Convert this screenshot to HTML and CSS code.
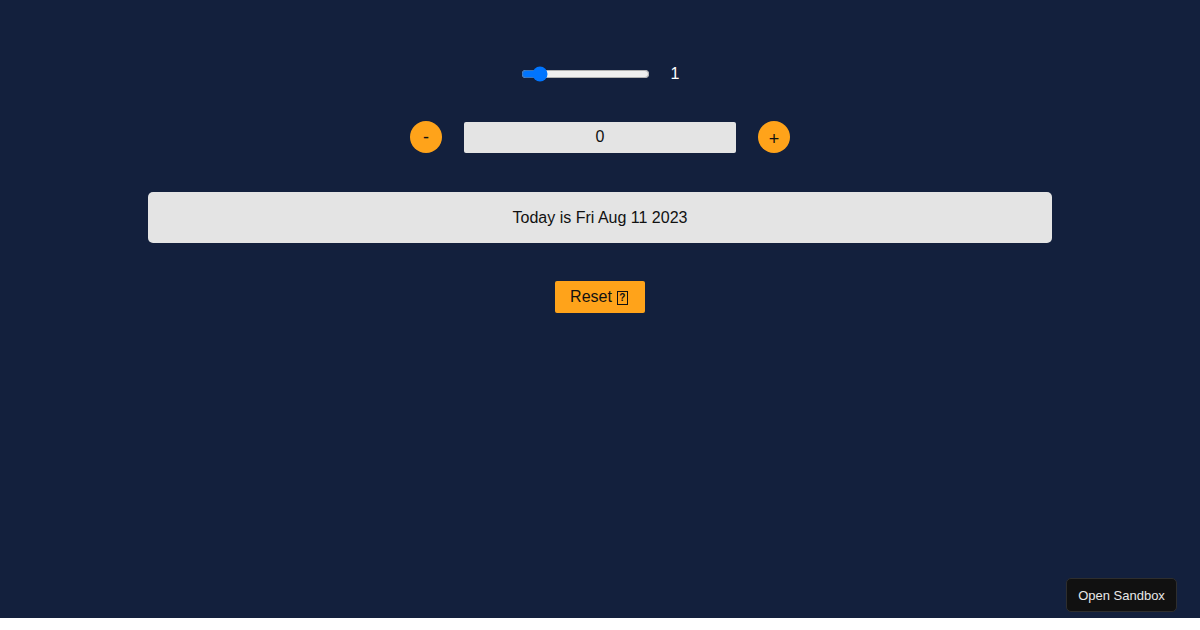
FILE: index.html
```html
<!DOCTYPE html>
<html>
<head>
<meta charset="utf-8">
<link rel="stylesheet" href="styles.css">
</head>
<body>
<div class="app">
  <div class="slider-row">
    <input class="slider" type="range" min="0" max="10" value="1">
    <span class="slider-value">1</span>
  </div>
  <div class="counter-row">
    <button class="round-btn">-</button>
    <input class="count-input" type="text" value="0">
    <button class="round-btn plus">+</button>
  </div>
  <div class="date-box">Today is Fri Aug 11 2023</div>
  <button class="reset-btn">Reset <span class="tofu">?</span></button>
  <button class="sandbox-btn">Open Sandbox</button>
</div>
</body>
</html>
```
FILE: styles.css
```css
html, body {
  margin: 0;
  padding: 0;
  background: #ffffff;
  font-family: "Liberation Sans", Arial, sans-serif;
}
.app {
  position: relative;
  height: 618px;
  background: #13203d;
  display: flex;
  flex-direction: column;
  align-items: center;
  padding-top: 65px;
  box-sizing: border-box;
}
.slider-row {
  display: flex;
  align-items: center;
  gap: 21px;
  height: 18px;
  margin-left: 0;
}
.slider {
  width: 129px;
  margin: 0;
}
.slider-value {
  color: #ffffff;
  font-size: 16px;
}
.counter-row {
  display: flex;
  align-items: center;
  gap: 22px;
  margin-top: 38px;
}
.round-btn {
  width: 32px;
  height: 32px;
  border-radius: 50%;
  border: none;
  background: #ffa31a;
  color: #111;
  font-family: "Liberation Sans", Arial, sans-serif;
  font-size: 18px;
  padding: 0;
  display: flex;
  align-items: center;
  justify-content: center;
}
.round-btn.plus {
  padding-top: 4px;
}
.count-input {
  width: 272px;
  height: 31px;
  box-sizing: border-box;
  border: none;
  border-radius: 2px;
  background: #e4e4e4;
  color: #111;
  text-align: center;
  font-family: "Liberation Sans", Arial, sans-serif;
  font-size: 16px;
  padding: 0;
}
.date-box {
  width: 904px;
  height: 51px;
  margin-top: 39px;
  background: #e4e4e4;
  border-radius: 5px;
  display: flex;
  align-items: center;
  justify-content: center;
  color: #111;
  font-size: 16px;
}
.reset-btn {
  margin-top: 38px;
  width: 90px;
  height: 32px;
  border: none;
  border-radius: 2px;
  background: #ffa31a;
  color: #111;
  font-family: "Liberation Sans", Arial, sans-serif;
  font-size: 16px;
  padding: 0 2px 0 0;
  display: flex;
  align-items: center;
  justify-content: center;
  gap: 5px;
}
.tofu {
  display: inline-flex;
  align-items: center;
  justify-content: center;
  box-sizing: border-box;
  width: 11px;
  height: 14px;
  border: 1.5px solid #111;
  margin-top: 1px;
  font-size: 10px;
  font-weight: bold;
  line-height: 1;
}
.sandbox-btn {
  position: absolute;
  right: 23px;
  bottom: 6px;
  width: 111px;
  height: 34px;
  background: #111111;
  border: 1px solid #2e2e2e;
  border-radius: 5px;
  color: #e8e8e8;
  font-family: "Liberation Sans", Arial, sans-serif;
  font-size: 13px;
  padding: 0;
}
```
